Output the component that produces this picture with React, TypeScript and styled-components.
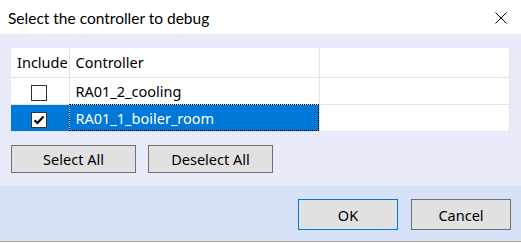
import * as React from "react";
import styled, { createGlobalStyle } from "styled-components";

const GlobalStyle = createGlobalStyle`
  html, body {
    margin: 0;
    padding: 0;
    background: #ffffff;
  }
  body {
    font-family: "Segoe UI", "Noto Sans", "Open Sans", sans-serif;
  }
`;

const controllers = [
  { name: "RA01_2_cooling", included: false },
  { name: "RA01_1_boiler_room", included: true },
];

const Dialog = styled.div`
  width: 521px;
  height: 243px;
  display: flex;
  flex-direction: column;
  box-sizing: border-box;
  overflow: hidden;
`;

const TitleBar = styled.div`
  height: 34px;
  flex: 0 0 34px;
  background: #ffffff;
  display: flex;
  align-items: center;
  justify-content: space-between;
  padding: 0 14px 0 8px;
  color: #000;
`;

const Title = styled.span`
  font-family: "Segoe UI", Lato, "Noto Sans", sans-serif;
  font-size: 15.5px;
  padding-top: 1px;
`;

const CloseButton = styled.div`
  width: 12px;
  height: 12px;
  display: flex;
  margin-top: 1px;
`;

const Body = styled.div`
  flex: 0 0 152px;
  background: #e8ebf9;
  padding: 14px 11px 0 11px;
  box-sizing: border-box;
`;

const Grid = styled.table`
  width: 499px;
  border-collapse: collapse;
  background: #ffffff;
  table-layout: fixed;
  font-size: 14.5px;
  color: #000;
`;

const HeaderCell = styled.th<{ $w?: number }>`
  width: ${(p) => (p.$w ? `${p.$w}px` : "auto")};
  height: 29px;
  padding: 0 6px;
  text-align: left;
  font-weight: normal;
  border-right: 1px solid #e3e3e3;
  border-bottom: 1px solid #e3e3e3;
  box-sizing: border-box;
  white-space: nowrap;
`;

const Row = styled.tr<{ $selected?: boolean }>`
  height: 27px;
  background: ${(p) => (p.$selected ? "#0078d7" : "#ffffff")};
  color: ${(p) => (p.$selected ? "#ffffff" : "#000")};
`;

const CheckCell = styled.td`
  padding: 0;
  text-align: center;
  border-bottom: 1px solid #e3e3e3;
  border-right: 1px solid #e3e3e3;
`;

const NameCell = styled.td<{ $focused?: boolean }>`
  padding: 0 6px;
  border-bottom: 1px solid #e3e3e3;
  border-right: 1px solid #e3e3e3;
  outline: ${(p) => (p.$focused ? "1px dotted #000" : "none")};
  outline-offset: -1px;
  white-space: nowrap;
`;

const EmptyCell = styled.td`
  background: #ffffff;
  border-bottom: 1px solid #e3e3e3;
  border-right: 1px solid #e3e3e3;
`;

const Check = styled.span`
  display: inline-flex;
  width: 16px;
  height: 16px;
  box-sizing: border-box;
  border: 1px solid #333;
  background: #fff;
  vertical-align: middle;
  margin-left: -2px;
`;

const ButtonRow = styled.div`
  display: flex;
  gap: 12px;
  margin-top: 13px;
`;

const Button = styled.button<{ $default?: boolean; $w: number; $h: number }>`
  width: ${(p) => p.$w}px;
  height: ${(p) => p.$h}px;
  background: #e1e1e1;
  border: 1px solid ${(p) => (p.$default ? "#0078d7" : "#707070")};
  font-family: inherit;
  font-size: 14.5px;
  color: #000;
  padding: 0;
  margin: 0;
`;

const Footer = styled.div`
  flex: 0 0 56px;
  background: #d6e2f8;
  border-bottom: 1px solid #a8a8a8;
  display: flex;
  justify-content: flex-end;
  gap: 13px;
  padding: 13px 10px 0 0;
  box-sizing: border-box;
`;

function CheckBox({ checked }: { checked: boolean }) {
  return (
    <Check>
      {checked && (
        <svg width="14" height="14" viewBox="0 0 14 14">
          <path d="M2.5 7.2 L5.5 10 L11.5 3.6" fill="none" stroke="#000" strokeWidth="2.2" />
        </svg>
      )}
    </Check>
  );
}

export default function App() {
  return (
    <Dialog>
      <GlobalStyle />
      <TitleBar>
        <Title>Select the controller to debug</Title>
        <CloseButton>
          <svg width="12" height="12" viewBox="0 0 12 12">
            <path d="M0.5 0.5 L11.5 11.5 M11.5 0.5 L0.5 11.5" stroke="#000" strokeWidth="1" />
          </svg>
        </CloseButton>
      </TitleBar>
      <Body>
        <Grid>
          <thead>
            <tr>
              <HeaderCell $w={58}>Include</HeaderCell>
              <HeaderCell $w={250}>Controller</HeaderCell>
              <HeaderCell />
            </tr>
          </thead>
          <tbody>
            {controllers.map((c) => (
              <Row key={c.name} $selected={c.included}>
                <CheckCell>
                  <CheckBox checked={c.included} />
                </CheckCell>
                <NameCell $focused={c.included}>{c.name}</NameCell>
                <EmptyCell />
              </Row>
            ))}
          </tbody>
        </Grid>
        <ButtonRow>
          <Button $w={125} $h={28}>Select All</Button>
          <Button $w={125} $h={28}>Deselect All</Button>
        </ButtonRow>
      </Body>
      <Footer>
        <Button $default $w={100} $h={31}>OK</Button>
        <Button $w={100} $h={31}>Cancel</Button>
      </Footer>
    </Dialog>
  );
}
